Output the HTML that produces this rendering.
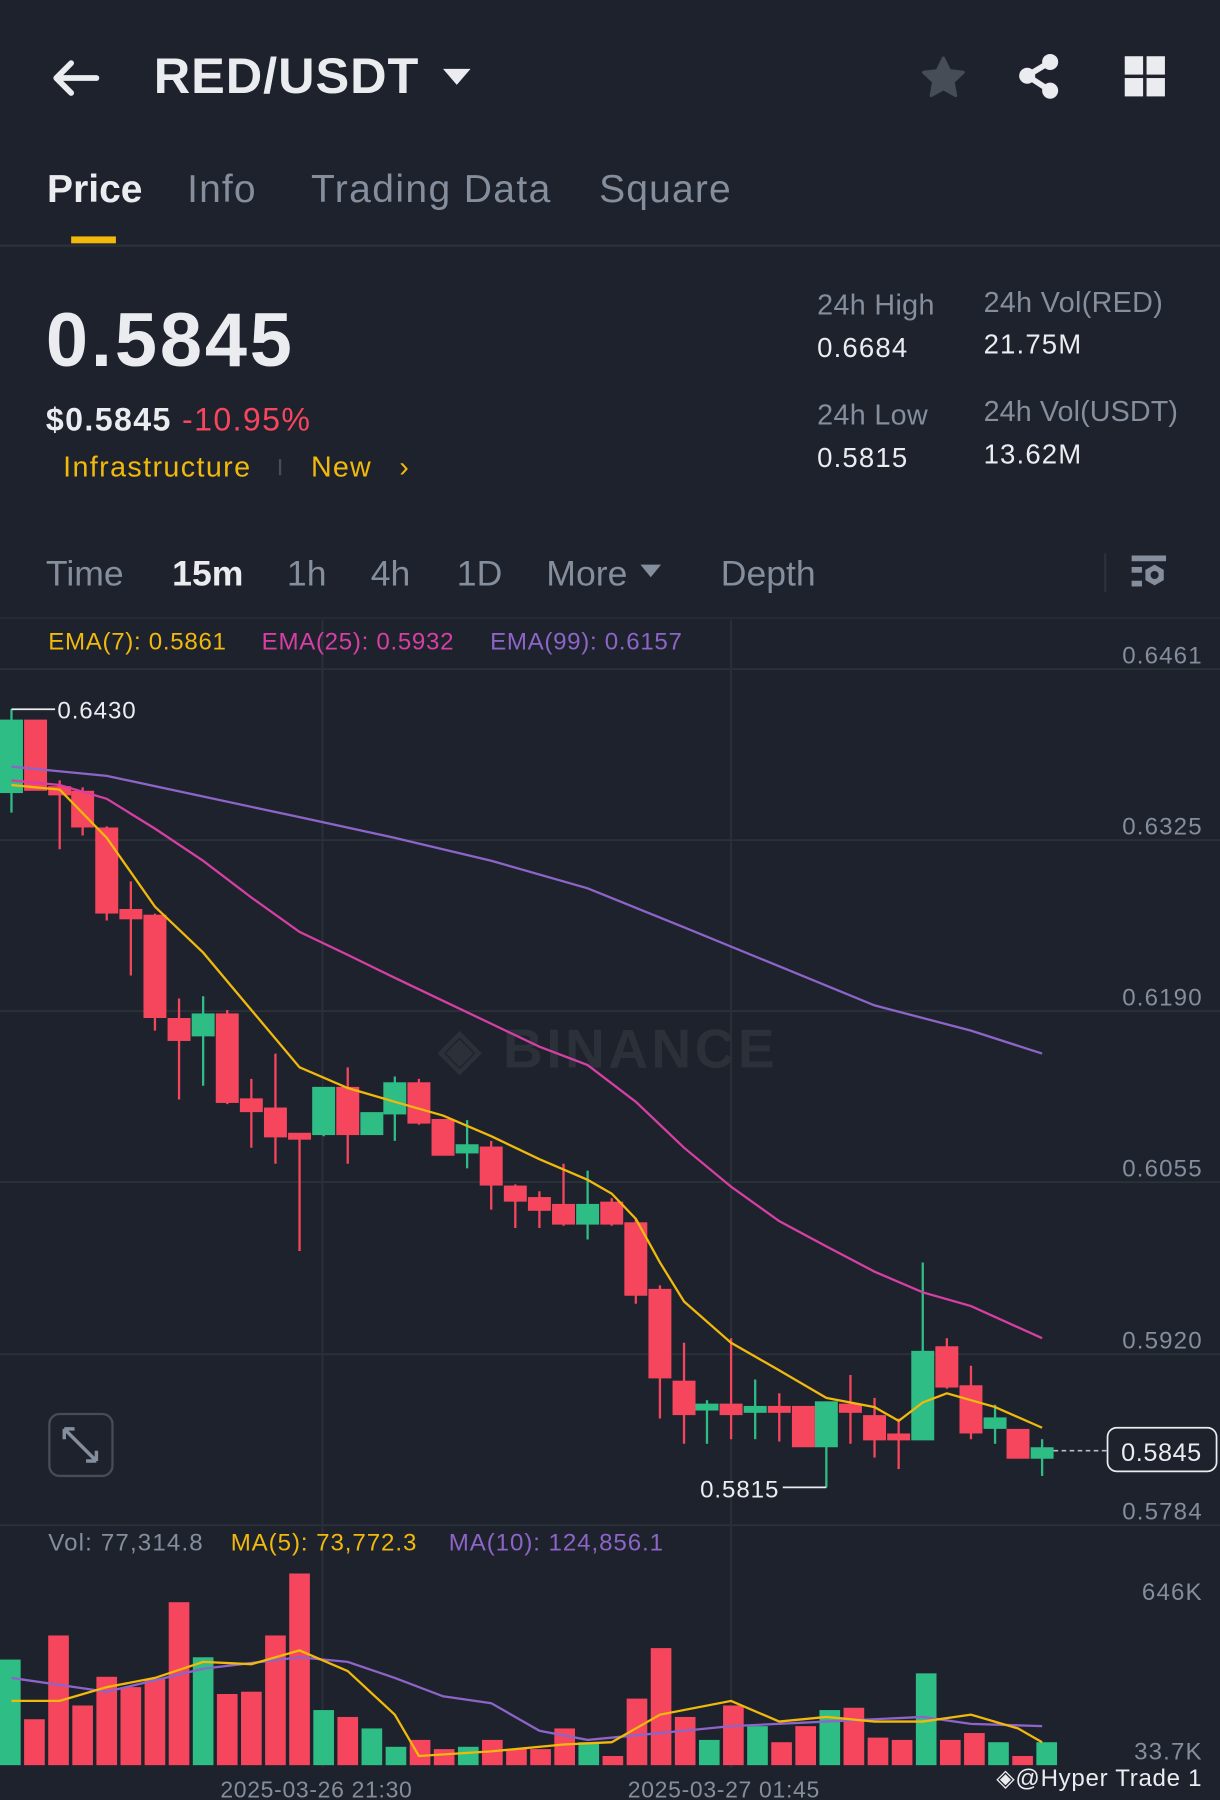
<!DOCTYPE html>
<html><head><meta charset="utf-8"><style>
html,body{margin:0;padding:0;background:#1e222d;width:1220px;height:1799px;overflow:hidden}
#w{position:absolute;left:0;top:0;width:1063px;height:1568px;transform:scale(1.14770);transform-origin:0 0;font-family:"Liberation Sans",sans-serif;color:#eaecef}
.a{position:absolute;white-space:nowrap}
.g{color:#848e9c}
</style></head><body><div id="w">
<svg class="a" style="left:44px;top:50px" width="44" height="36" viewBox="0 0 44 36"><path d="M40 18H6M18 5L5 18L18 31" stroke="#eaecef" stroke-width="5" fill="none" stroke-linecap="round" stroke-linejoin="round"/></svg>
<div class="a" style="left:134px;top:42px;font-size:44px;font-weight:bold;letter-spacing:0.8px">RED/USDT</div>
<svg class="a" style="left:384px;top:58px" width="28" height="18"><path d="M2 2H26L14 16Z" fill="#eaecef"/></svg>
<svg class="a" style="left:800px;top:46px" width="44" height="44" viewBox="0 0 24 24"><path d="M12 2.5l2.9 6 6.5.8-4.8 4.5 1.2 6.5L12 17.1 6.2 20.3l1.2-6.5L2.6 9.3l6.5-.8z" fill="#474d57" stroke="#474d57" stroke-linejoin="round" stroke-width="1.5"/></svg>
<svg class="a" style="left:884px;top:44px" width="44" height="44" viewBox="0 0 44 44"><circle cx="31" cy="10" r="7" fill="#eaecef"/><circle cx="31" cy="35" r="7" fill="#eaecef"/><circle cx="11" cy="22" r="7" fill="#eaecef"/><path d="M31 10L11 22L31 35" stroke="#eaecef" stroke-width="5" fill="none"/></svg>
<svg class="a" style="left:979px;top:48px" width="38" height="38"><rect x="1" y="1" width="16" height="16" fill="#eaecef"/><rect x="20" y="1" width="16" height="16" fill="#eaecef"/><rect x="1" y="20" width="16" height="16" fill="#eaecef"/><rect x="20" y="20" width="16" height="16" fill="#eaecef"/></svg>
<div class="a" style="left:41px;top:146px;font-size:34px;font-weight:bold">Price</div>
<div class="a g" style="left:163px;top:146px;font-size:34px;letter-spacing:1px">Info</div>
<div class="a g" style="left:271px;top:146px;font-size:34px;letter-spacing:1.2px">Trading Data</div>
<div class="a g" style="left:522px;top:146px;font-size:34px;letter-spacing:1px">Square</div>
<div class="a" style="left:62px;top:206px;width:39px;height:6px;background:#f0b90b"></div>
<div class="a" style="left:0;top:213px;width:1063px;height:2px;background:#2b3139"></div>
<div class="a" style="left:40px;top:258px;font-size:66px;font-weight:bold;letter-spacing:2.5px">0.5845</div>
<div class="a" style="left:40px;top:350px;font-size:28px;font-weight:bold;letter-spacing:1.2px">$0.5845 <span style="color:#f6465d;font-weight:normal">-10.95%</span></div>
<div class="a" style="left:55px;top:393px;font-size:25px;color:#f0b90b;letter-spacing:1.2px">Infrastructure</div>
<div class="a" style="left:243px;top:400px;width:2px;height:14px;background:#474d57"></div>
<div class="a" style="left:271px;top:393px;font-size:25px;color:#f0b90b;letter-spacing:1px">New&nbsp;&nbsp;&nbsp;›</div>
<div class="a g" style="left:712px;top:252px;font-size:25px;letter-spacing:0.3px">24h High</div>
<div class="a" style="left:712px;top:290px;font-size:24px;letter-spacing:1px">0.6684</div>
<div class="a g" style="left:712px;top:348px;font-size:25px;letter-spacing:0.3px">24h Low</div>
<div class="a" style="left:712px;top:386px;font-size:24px;letter-spacing:1px">0.5815</div>
<div class="a g" style="left:857px;top:250px;font-size:25px;letter-spacing:0.3px">24h Vol(RED)</div>
<div class="a" style="left:857px;top:287px;font-size:24px;letter-spacing:1px">21.75M</div>
<div class="a g" style="left:857px;top:345px;font-size:25px;letter-spacing:0.1px">24h Vol(USDT)</div>
<div class="a" style="left:857px;top:383px;font-size:24px;letter-spacing:1px">13.62M</div>
<div class="a g" style="left:40px;top:482px;font-size:31px">Time</div>
<div class="a" style="left:150px;top:482px;font-size:31px;font-weight:bold">15m</div>
<div class="a g" style="left:250px;top:482px;font-size:31px">1h</div>
<div class="a g" style="left:323px;top:482px;font-size:31px">4h</div>
<div class="a g" style="left:398px;top:482px;font-size:31px">1D</div>
<div class="a g" style="left:476px;top:482px;font-size:31px">More</div>
<svg class="a" style="left:557px;top:491px" width="20" height="14"><path d="M1 1H19L10 12Z" fill="#848e9c"/></svg>
<div class="a g" style="left:628px;top:482px;font-size:31px">Depth</div>
<div class="a" style="left:962px;top:482px;width:2px;height:34px;background:#2b3139"></div>
<svg class="a" style="left:983px;top:482px" width="36" height="34"><rect x="3" y="2" width="30" height="5" fill="#848e9c"/><rect x="3" y="12" width="9" height="5" fill="#848e9c"/><rect x="3" y="24" width="9" height="5" fill="#848e9c"/><path d="M23 10l8 4.5v9l-8 4.5-8-4.5v-9z" fill="#848e9c"/><circle cx="23" cy="19" r="3.5" fill="#1e222d"/></svg>
<div class="a" style="left:0;top:538px;width:1063px;height:1px;background:#2b3139"></div>
<svg class="a" style="left:0;top:0" width="1063" height="1568">
<g stroke="#2b3139" stroke-width="1.5">
<line x1="0" y1="583" x2="1063" y2="583"/><line x1="0" y1="732" x2="1063" y2="732"/><line x1="0" y1="881" x2="1063" y2="881"/><line x1="0" y1="1030" x2="1063" y2="1030"/><line x1="0" y1="1180" x2="1063" y2="1180"/><line x1="0" y1="1329" x2="1063" y2="1329"/>
<line x1="281" y1="540" x2="281" y2="1540"/><line x1="637" y1="540" x2="637" y2="1540"/></g>
<text x="530" y="930" font-family="Liberation Sans" font-weight="bold" font-size="48" fill="#2c3039" text-anchor="middle" letter-spacing="3">◈ BINANCE</text>
<g id="c" stroke-width="2">
<g fill="#2ebd85" stroke="#2ebd85"><line x1="10" y1="618" x2="10" y2="708"/><rect x="1" y="628" width="18" height="62"/>
<line x1="177" y1="868" x2="177" y2="946"/><rect x="168" y="884" width="18" height="18"/>
<line x1="282" y1="948" x2="282" y2="990"/><rect x="273" y="948" width="18" height="40"/>
<rect x="315" y="970" width="18" height="18"/>
<line x1="344" y1="938" x2="344" y2="994"/><rect x="335" y="944" width="18" height="26"/>
<line x1="407" y1="976" x2="407" y2="1018"/><rect x="398" y="998" width="18" height="6"/>
<line x1="512" y1="1020" x2="512" y2="1080"/><rect x="503" y="1050" width="18" height="16"/>
<line x1="616" y1="1220" x2="616" y2="1258"/><rect x="607" y="1224" width="18" height="4"/>
<line x1="658" y1="1202" x2="658" y2="1254"/><rect x="649" y="1226" width="18" height="4"/>
<line x1="720" y1="1222" x2="720" y2="1296"/><rect x="711" y="1222" width="18" height="38"/>
<line x1="804" y1="1100" x2="804" y2="1254"/><rect x="795" y="1178" width="18" height="76"/>
<line x1="867" y1="1224" x2="867" y2="1258"/><rect x="858" y="1236" width="18" height="8"/>
<line x1="908" y1="1254" x2="908" y2="1286"/><rect x="899" y="1262" width="18" height="8"/></g>
<g fill="#f6465d" stroke="#f6465d"><rect x="22" y="628" width="18" height="60"/>
<line x1="52" y1="680" x2="52" y2="740"/><rect x="43" y="686" width="18" height="6"/>
<line x1="72" y1="686" x2="72" y2="728"/><rect x="63" y="690" width="18" height="30"/>
<rect x="84" y="722" width="18" height="73"/><line x1="93" y1="720" x2="93" y2="802"/>
<line x1="114" y1="768" x2="114" y2="850"/><rect x="105" y="793" width="18" height="7"/>
<line x1="135" y1="796" x2="135" y2="898"/><rect x="126" y="798" width="18" height="88"/>
<line x1="156" y1="870" x2="156" y2="958"/><rect x="147" y="888" width="18" height="18"/>
<line x1="198" y1="880" x2="198" y2="962"/><rect x="189" y="884" width="18" height="76"/>
<line x1="219" y1="940" x2="219" y2="1000"/><rect x="210" y="958" width="18" height="10"/>
<line x1="240" y1="918" x2="240" y2="1014"/><rect x="231" y="966" width="18" height="24"/>
<line x1="261" y1="988" x2="261" y2="1090"/><rect x="252" y="988" width="18" height="4"/>
<line x1="303" y1="930" x2="303" y2="1014"/><rect x="294" y="948" width="18" height="40"/>
<rect x="356" y="944" width="18" height="34"/><line x1="365" y1="940" x2="365" y2="980"/>
<rect x="377" y="976" width="18" height="30"/>
<line x1="428" y1="994" x2="428" y2="1054"/><rect x="419" y="1000" width="18" height="32"/>
<line x1="449" y1="1032" x2="449" y2="1070"/><rect x="440" y="1034" width="18" height="12"/>
<line x1="470" y1="1038" x2="470" y2="1070"/><rect x="461" y="1044" width="18" height="10"/>
<line x1="491" y1="1014" x2="491" y2="1068"/><rect x="482" y="1050" width="18" height="16"/>
<line x1="533" y1="1044" x2="533" y2="1068"/><rect x="524" y="1048" width="18" height="18"/>
<line x1="554" y1="1062" x2="554" y2="1136"/><rect x="545" y="1066" width="18" height="62"/>
<line x1="575" y1="1120" x2="575" y2="1236"/><rect x="566" y="1124" width="18" height="76"/>
<line x1="596" y1="1170" x2="596" y2="1258"/><rect x="587" y="1204" width="18" height="28"/>
<line x1="637" y1="1166" x2="637" y2="1254"/><rect x="628" y="1224" width="18" height="8"/>
<line x1="679" y1="1214" x2="679" y2="1256"/><rect x="670" y="1226" width="18" height="4"/>
<rect x="691" y="1226" width="18" height="34"/>
<line x1="741" y1="1198" x2="741" y2="1258"/><rect x="732" y="1224" width="18" height="6"/>
<line x1="762" y1="1218" x2="762" y2="1270"/><rect x="753" y="1234" width="18" height="20"/>
<line x1="783" y1="1236" x2="783" y2="1280"/><rect x="774" y="1250" width="18" height="4"/>
<line x1="825" y1="1166" x2="825" y2="1210"/><rect x="816" y="1174" width="18" height="34"/>
<line x1="846" y1="1190" x2="846" y2="1254"/><rect x="837" y="1208" width="18" height="40"/>
<rect x="878" y="1246" width="18" height="24"/></g></g>
<g fill="none" stroke-width="2">
<polyline stroke="#8d64c8" points="10,668 93,676 177,694 261,712 344,730 428,750 512,774 596,808 679,842 762,876 846,898 908,918"/>
<polyline stroke="#d63fa4" points="10,680 52,684 93,696 135,722 177,750 219,782 261,812 303,832 344,852 386,872 428,892 470,912 512,928 554,960 596,1000 637,1034 679,1064 720,1086 762,1108 804,1126 846,1138 908,1166"/>
<polyline stroke="#f0b90b" points="10,684 52,688 93,730 135,790 177,830 219,880 261,930 303,948 344,960 386,972 428,990 470,1010 512,1028 533,1040 554,1062 575,1100 596,1134 637,1170 679,1194 720,1218 762,1226 783,1238 804,1222 825,1214 846,1220 867,1226 908,1244"/>
</g>
<polyline points="10,618 48,618" stroke="#eaecef" stroke-width="1.5" fill="none"/>
<text x="50" y="626" font-family="Liberation Sans" font-size="21" fill="#eaecef" letter-spacing="0.8">0.6430</text>
<polyline points="720,1296 682,1296" stroke="#eaecef" stroke-width="1.5" fill="none"/>
<text x="610" y="1305" font-family="Liberation Sans" font-size="21" fill="#eaecef" letter-spacing="0.8">0.5815</text>
<line x1="918" y1="1264" x2="964" y2="1264" stroke="#b7bdc6" stroke-width="1.5" stroke-dasharray="4 3"/>
<rect x="965" y="1244" width="95" height="38" rx="8" fill="#1e222d" stroke="#eaecef" stroke-width="1.5"/>
<text x="1012" y="1273" font-family="Liberation Sans" font-size="22" fill="#eaecef" text-anchor="middle" letter-spacing="0.5">0.5845</text>
<g font-family="Liberation Sans" font-size="21" fill="#848e9c" text-anchor="end" letter-spacing="1">
<text x="1048" y="578">0.6461</text><text x="1048" y="727">0.6325</text><text x="1048" y="876">0.6190</text><text x="1048" y="1025">0.6055</text><text x="1048" y="1175">0.5920</text><text x="1048" y="1324">0.5784</text>
<text x="1048" y="1394">646K</text><text x="1048" y="1533">33.7K</text></g>
<rect x="43" y="1232" width="55" height="54" rx="9" fill="none" stroke="#474d57" stroke-width="2"/>
<path d="M56 1245l28 28M56 1245h9M56 1245v9M84 1273h-9M84 1273v-9" stroke="#848e9c" stroke-width="3" fill="none"/>
<g fill="#f6465d">
<rect x="21" y="1498" width="18" height="40"/><rect x="42" y="1425" width="18" height="113"/><rect x="63" y="1486" width="18" height="52"/><rect x="84" y="1461" width="18" height="77"/><rect x="105" y="1470" width="18" height="68"/><rect x="126" y="1463" width="18" height="75"/><rect x="147" y="1396" width="18" height="142"/><rect x="189" y="1476" width="18" height="62"/><rect x="210" y="1474" width="18" height="64"/><rect x="231" y="1425" width="18" height="113"/><rect x="252" y="1371" width="18" height="167"/><rect x="294" y="1496" width="18" height="42"/><rect x="357" y="1516" width="18" height="22"/><rect x="378" y="1524" width="18" height="14"/><rect x="420" y="1516" width="18" height="22"/><rect x="441" y="1524" width="18" height="14"/><rect x="462" y="1524" width="18" height="14"/><rect x="483" y="1506" width="18" height="32"/><rect x="525" y="1530" width="18" height="8"/><rect x="546" y="1480" width="18" height="58"/><rect x="567" y="1436" width="18" height="102"/><rect x="588" y="1496" width="18" height="42"/><rect x="630" y="1486" width="18" height="52"/><rect x="672" y="1518" width="18" height="20"/><rect x="693" y="1504" width="18" height="34"/><rect x="735" y="1488" width="18" height="50"/><rect x="756" y="1514" width="18" height="24"/><rect x="777" y="1516" width="18" height="22"/><rect x="819" y="1516" width="18" height="22"/><rect x="840" y="1510" width="18" height="28"/><rect x="882" y="1530" width="18" height="8"/></g>
<g fill="#2ebd85">
<rect x="0" y="1446" width="18" height="92"/><rect x="168" y="1444" width="18" height="94"/><rect x="273" y="1490" width="18" height="48"/><rect x="315" y="1506" width="18" height="32"/><rect x="336" y="1522" width="18" height="16"/><rect x="399" y="1522" width="18" height="16"/><rect x="504" y="1518" width="18" height="20"/><rect x="609" y="1516" width="18" height="22"/><rect x="651" y="1504" width="18" height="34"/><rect x="714" y="1490" width="18" height="48"/><rect x="798" y="1458" width="18" height="80"/><rect x="861" y="1518" width="18" height="20"/><rect x="903" y="1518" width="18" height="20"/></g>
<g fill="none" stroke-width="2">
<polyline stroke="#8d64c8" points="10,1462 93,1474 177,1454 261,1444 303,1448 344,1462 386,1478 428,1484 470,1508 512,1516 554,1512 596,1508 637,1504 720,1500 804,1496 846,1502 908,1504"/>
<polyline stroke="#f0b90b" points="10,1482 52,1482 93,1470 135,1462 177,1448 219,1450 261,1438 303,1456 344,1494 365,1530 428,1526 491,1520 533,1518 575,1494 637,1482 679,1500 720,1496 762,1500 804,1500 846,1494 887,1506 908,1518"/></g>
<g font-family="Liberation Sans" font-size="20" fill="#848e9c" letter-spacing="0.6"><text x="192" y="1566">2025-03-26 21:30</text><text x="547" y="1566">2025-03-27 01:45</text></g>
<text x="868" y="1556" font-family="Liberation Sans" font-size="21" fill="#eaecef" letter-spacing="0.6">◈@Hyper Trade 1</text>
</svg>
<div class="a" style="left:42px;top:548px;font-size:21px;color:#f0b90b;letter-spacing:0.6px">EMA(7): 0.5861</div>
<div class="a" style="left:228px;top:548px;font-size:21px;color:#d63fa4;letter-spacing:0.6px">EMA(25): 0.5932</div>
<div class="a" style="left:427px;top:548px;font-size:21px;color:#8d64c8;letter-spacing:0.6px">EMA(99): 0.6157</div>
<div class="a g" style="left:42px;top:1333px;font-size:21px;letter-spacing:1px">Vol: 77,314.8</div>
<div class="a" style="left:201px;top:1333px;font-size:21px;color:#f0b90b;letter-spacing:0.8px">MA(5): 73,772.3</div>
<div class="a" style="left:391px;top:1333px;font-size:21px;color:#8d64c8;letter-spacing:0.8px">MA(10): 124,856.1</div>
</div></body></html>
